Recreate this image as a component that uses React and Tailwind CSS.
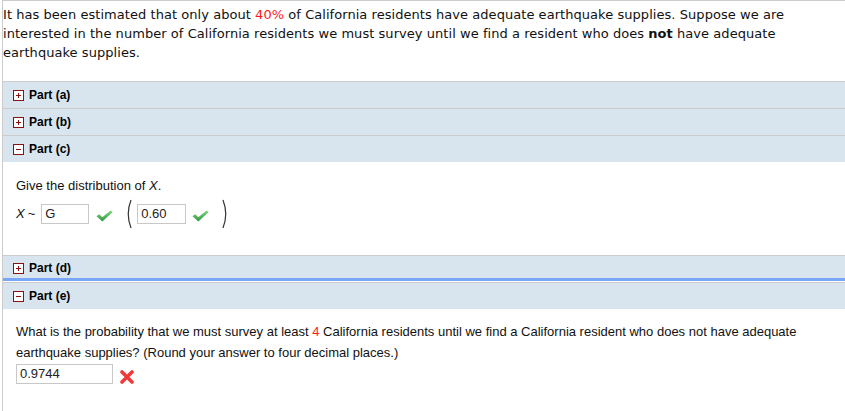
import React from 'react';

function BoxIcon({ open }) {
    return (
        <svg width="11" height="11" viewBox="0 0 11 11" className="shrink-0">
            <rect x="0.5" y="0.5" width="10" height="10" fill="#fff" stroke="#8b1111" />
            <line x1="3" y1="5.5" x2="8" y2="5.5" stroke="#8b1111" strokeWidth="1" />
            {!open && <line x1="5.5" y1="3" x2="5.5" y2="8" stroke="#8b1111" strokeWidth="1" />}
        </svg>
    );
}

function Check() {
    return (
        <svg width="17" height="12" viewBox="0 0 17 12" className="shrink-0">
            <defs>
                <linearGradient id="ck" x1="0" y1="0" x2="0" y2="1">
                    <stop offset="0" stopColor="#7fd37f" />
                    <stop offset="1" stopColor="#2f9a3a" />
                </linearGradient>
            </defs>
            <path d="M0.5 6.2 L3.2 4.2 L6.3 7.3 L14.6 0.6 L16.5 2.2 L6.4 11.5 Z" fill="url(#ck)" />
        </svg>
    );
}

function Cross() {
    return (
        <svg width="14" height="14" viewBox="0 0 14 14" className="shrink-0">
            <path d="M2 2 L12 12 M12 2 L2 12" stroke="#ef3b3b" strokeWidth="3.6" strokeLinecap="round" />
        </svg>
    );
}

function Paren({ right }) {
    return (
        <svg width="8" height="30" viewBox="0 0 8 30" className="shrink-0">
            <path d={right ? 'M2 1 Q7.5 15 2 29' : 'M6 1 Q0.5 15 6 29'} stroke="#333" strokeWidth="1.2" fill="none" />
        </svg>
    );
}

function PartBar({ label, open, focused }) {
    return (
        <div className="border-t border-[#cccccc] bg-[#d8e4ee]">
            <div className={'flex items-center gap-[5px] pl-[10px] ' + (focused ? 'h-[22px] pt-[2px]' : 'h-[26px]')}>
                <BoxIcon open={open} />
                <span className="text-[12px] font-bold text-black">{label}</span>
            </div>
            {focused && <div className="h-[3px] bg-[#7aa6f7] mb-[1px]" />}
        </div>
    );
}

function Field({ value, w }) {
    return (
        <div className={'h-[20px] border border-[#c8c8c8] bg-white pl-[3px] text-[13px] leading-[18px] text-[#222] ' + w}>
            {value}
        </div>
    );
}

export default function App() {
    return (
        <div className="min-h-[411px] bg-white" style={{ fontFamily: '"Liberation Sans", Arial, sans-serif' }}>
            <div className="ml-[2px] border-l border-t border-[#cccccc] min-h-[411px]">
                <p className="pt-[4px] pb-[19px] text-[13px] leading-[19px] tracking-[0.05px] text-[#111]" style={{ fontFamily: '"DejaVu Sans", Verdana, sans-serif' }}>
                    It has been estimated that only about <span className="text-[#ff1a1a]">40%</span> of California residents have adequate earthquake supplies. Suppose we are interested in the number of California residents we must survey until we find a resident who does <b>not</b> have adequate earthquake supplies.
                </p>

                <PartBar label="Part (a)" />
                <PartBar label="Part (b)" />
                <PartBar label="Part (c)" open />

                <div className="h-[93px] pl-[13px] pt-[16px] text-[13px] text-[#111]">
                    <div className="leading-[16px]">Give the distribution of <i>X</i>.</div>
                    <div className="mt-[5px] flex items-center">
                        <span className="italic">X</span>
                        <span className="ml-[3px]">~</span>
                        <div className="ml-[6px]"><Field value="G" w="w-[48px]" /></div>
                        <div className="ml-[7px] mt-[3px]"><Check /></div>
                        <div className="ml-[12px]"><Paren /></div>
                        <div className="ml-[4px]"><Field value="0.60" w="w-[49px]" /></div>
                        <div className="ml-[6px] mt-[3px]"><Check /></div>
                        <div className="ml-[12px]"><Paren right /></div>
                    </div>
                </div>

                <PartBar label="Part (d)" focused />
                <PartBar label="Part (e)" open />

                <div className="pl-[13px] pt-[12px] text-[13px] leading-[21px] text-[#111]">
                    <p>
                        What is the probability that we must survey at least <span className="text-[#ff1a1a]">4</span> California residents until we find a California resident who does not have adequate earthquake supplies? (Round your answer to four decimal places.)
                    </p>
                    <div className="mt-[1px] flex items-center">
                        <Field value="0.9744" w="w-[97px]" />
                        <div className="ml-[7px] mt-[5px]"><Cross /></div>
                    </div>
                </div>
            </div>
        </div>
    );
}
